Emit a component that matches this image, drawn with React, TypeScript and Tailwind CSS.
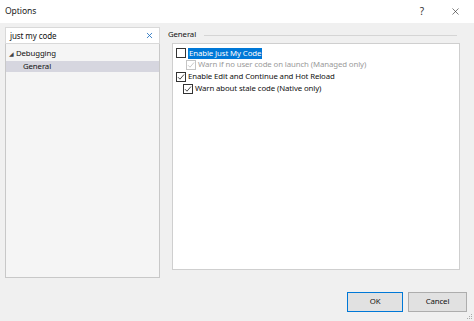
import { X } from 'lucide-react';

const font = { fontFamily: '"Noto Sans", "Open Sans", sans-serif' };

function Check({ checked, disabled }: { checked?: boolean; disabled?: boolean }) {
  const c = disabled ? '#c4c4c4' : '#333333';
  return (
    <span
      className="inline-flex w-[10px] h-[10px] shrink-0 items-center justify-center border bg-white"
      style={{ borderColor: c }}
    >
      {checked && (
        <svg width="8" height="8" viewBox="0 0 8 8">
          <path d="M1 4.2 L3 6.2 L7 1.5" fill="none" stroke={c} strokeWidth="0.9" />
        </svg>
      )}
    </span>
  );
}

export default function App() {
  return (
    <div
      className="relative w-[474px] h-[321px] bg-[#f0f0f0] text-[7.8px] tracking-[-0.1px] text-[#111] overflow-hidden flex flex-col"
      style={font}
    >
      {/* title bar */}
      <div className="h-[23px] bg-white flex items-center px-[5px] shrink-0">
        <span className="text-[8.6px] text-[#222]">Options</span>
        <span className="ml-auto mr-[26px] text-[10px] text-[#333]">?</span>
        <X size={11} strokeWidth={1.4} className="mr-[8px] text-[#333]" />
      </div>

      {/* body */}
      <div className="flex h-[255px] shrink-0">
        {/* left */}
        <div className="w-[155px] ml-[5px] mt-[4px] flex flex-col">
          <div className="h-[17px] bg-white border border-[#d9d9d9] flex items-center pl-[4px] pr-[5px]">
            <span className="text-[8px] text-[#111]">just my code</span>
            <X size={9} strokeWidth={2.2} className="ml-auto text-[#1e6fbf]" />
          </div>
          <div className="flex-1 bg-[#f5f5f5] border border-[#c8c8c8] border-t-0 pt-[4px]">
            <div className="h-[12px] flex items-center pl-[3px]">
              <span className="text-[5.5px] text-[#444] mr-[2px]">◢</span>
              <span>Debugging</span>
            </div>
            <div className="h-[11px] mt-[1px] flex items-center pl-[17px] bg-[#d6d6df]">General</div>
          </div>
        </div>

        {/* right */}
        <div className="w-[292px] ml-[8px] mt-[4px] flex flex-col">
          <div className="h-[16px] flex items-center">
            <span>General</span>
            <div className="flex-1 h-px bg-[#d5d5d5] ml-[8px] mr-[3px]" />
          </div>
          <div className="ml-[4px] w-[288px] h-[227px] bg-white border border-[#cfcfcf] pt-[3px] pl-[3px]">
            <div className="h-[12px] flex items-center">
              <Check />
              <span className="ml-[2px] bg-[#0078d7] text-white px-[1px] leading-[11px]">Enable Just My Code</span>
            </div>
            <div className="h-[12px] flex items-center pl-[10px]">
              <Check checked disabled />
              <span className="ml-[2px] text-[#9a9a9a]">Warn if no user code on launch (Managed only)</span>
            </div>
            <div className="h-[12px] flex items-center">
              <Check checked />
              <span className="ml-[2px]">Enable Edit and Continue and Hot Reload</span>
            </div>
            <div className="h-[12px] flex items-center pl-[7px]">
              <Check checked />
              <span className="ml-[2px]">Warn about stale code (Native only)</span>
            </div>
          </div>
        </div>
      </div>

      {/* buttons */}
      <div className="mt-[14px] flex justify-end pr-[7px] gap-[5px]">
        <button className="w-[56px] h-[20px] bg-[#e1e1e1] border border-[#0078d7] text-[7.8px]">OK</button>
        <button className="w-[59px] h-[20px] bg-[#e1e1e1] border border-[#adadad] text-[7.8px]">Cancel</button>
      </div>

      {/* resize grip */}
      <svg className="absolute right-[1px] bottom-[1px]" width="6" height="6" viewBox="0 0 6 6">
        <rect x="4" y="0" width="1" height="1" fill="#aaa" />
        <rect x="2" y="2" width="1" height="1" fill="#aaa" />
        <rect x="4" y="2" width="1" height="1" fill="#aaa" />
        <rect x="0" y="4" width="1" height="1" fill="#aaa" />
        <rect x="2" y="4" width="1" height="1" fill="#aaa" />
        <rect x="4" y="4" width="1" height="1" fill="#aaa" />
      </svg>
    </div>
  );
}
